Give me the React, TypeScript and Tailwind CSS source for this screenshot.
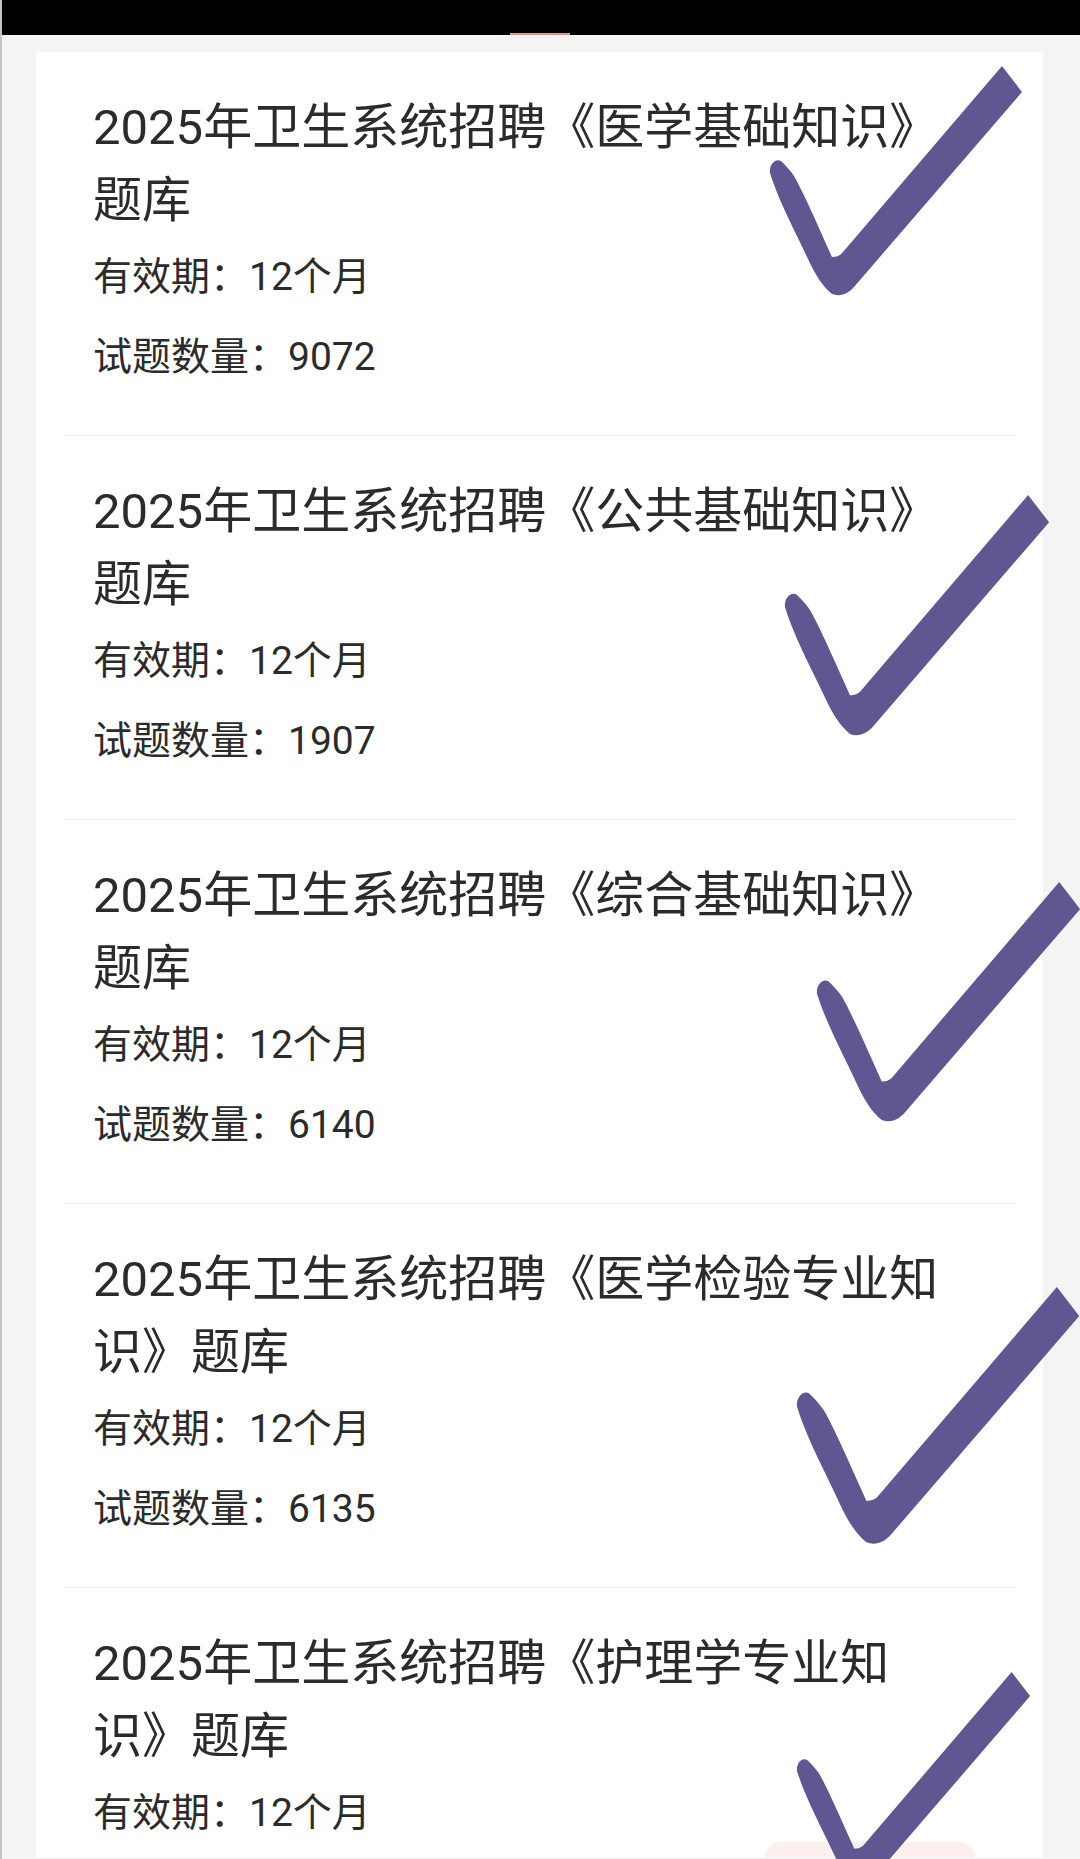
const items = [
  { title: "2025年卫生系统招聘《医学基础知识》题库", months: 12, count: 9072 },
  { title: "2025年卫生系统招聘《公共基础知识》题库", months: 12, count: 1907 },
  { title: "2025年卫生系统招聘《综合基础知识》题库", months: 12, count: 6140 },
  { title: "2025年卫生系统招聘《医学检验专业知识》题库", months: 12, count: 6135 },
  { title: "2025年卫生系统招聘《护理学专业知识》题库", months: 12, count: 0 },
];

// hand-drawn tick, local box 252 x 230
const TICK =
  "M 0 107 C -1 99, 5 92, 11 95 C 16 100, 20 104, 24 110 C 32 124, 42 146, 62 191 C 66 191, 70 190, 73 186 L 232 0 L 252 26 L 84 221 C 78 228, 70 231, 62 228 C 52 220, 45 208, 38 193 C 25 165, 9 136, 0 107 Z";

const ticks = [
  { x: 768, y: 66, s: 1 },
  { x: 783, y: 495, s: 1.048 },
  { x: 815, y: 882, s: 1.044 },
  { x: 795, y: 1287, s: 1.12 },
  { x: 795, y: 1672, s: 0.925 },
];

function Tick({ x, y, s }: { x: number; y: number; s: number }) {
  return (
    <svg
      className="absolute overflow-visible pointer-events-none"
      style={{ left: x, top: y, width: 252 * s, height: 230 * s }}
      viewBox="0 0 252 230"
    >
      <path d={TICK} fill="#5f5791" />
    </svg>
  );
}

export default function App() {
  return (
    <div
      className="relative h-[1859px] w-[1080px] overflow-hidden bg-[#f4f4f4] border-l-2 border-[#c6c6c6] flex flex-col text-[#2b2b2b] [text-spacing-trim:space-all]"
      style={{ fontFamily: 'Roboto, "Noto Sans CJK SC", sans-serif' }}
    >
      <div className="h-[35px] shrink-0 flex flex-col bg-black">
        <div className="mt-auto ml-[508px] h-[2px] w-[60px] bg-[#e3957f]" />
      </div>
      <div className="mt-[17px] ml-[34px] mr-[37px] mb-[2px] flex-1 overflow-hidden bg-white px-[27px]">
        {items.map((it, i) => (
          <div key={i} className="border-b border-[#eeeeee] pl-[30px] pt-[39px] pb-[38px]">
            <div className="w-[870px] text-[49px] leading-[73px]">{it.title}</div>
            <div className="text-[39px] leading-[80px]">
              <div>有效期：{it.months}个月</div>
              <div>试题数量：{it.count}</div>
            </div>
          </div>
        ))}
      </div>
      <div className="absolute left-[763px] top-[1842px] h-[15px] w-[210px] rounded-t-full bg-[#fdefee]" />
      {ticks.map((t, i) => (
        <Tick key={i} {...t} />
      ))}
    </div>
  );
}
